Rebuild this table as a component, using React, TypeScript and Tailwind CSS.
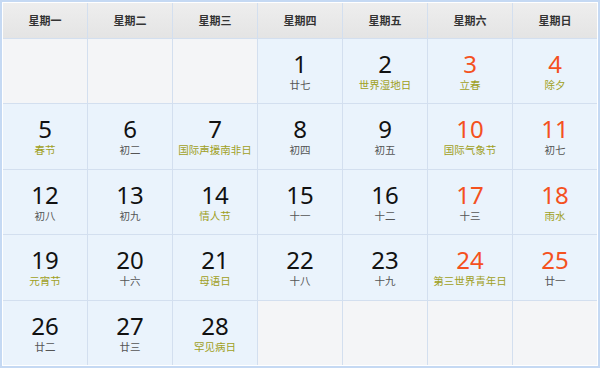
import React from "react";

type Cell = { d: number; t: string; f?: boolean } | null;

const rows: Cell[][] = [
  [null, null, null, { d: 1, t: "廿七" }, { d: 2, t: "世界湿地日", f: true }, { d: 3, t: "立春", f: true }, { d: 4, t: "除夕", f: true }],
  [{ d: 5, t: "春节", f: true }, { d: 6, t: "初二" }, { d: 7, t: "国际声援南非日", f: true }, { d: 8, t: "初四" }, { d: 9, t: "初五" }, { d: 10, t: "国际气象节", f: true }, { d: 11, t: "初七" }],
  [{ d: 12, t: "初八" }, { d: 13, t: "初九" }, { d: 14, t: "情人节", f: true }, { d: 15, t: "十一" }, { d: 16, t: "十二" }, { d: 17, t: "十三" }, { d: 18, t: "雨水", f: true }],
  [{ d: 19, t: "元宵节", f: true }, { d: 20, t: "十六" }, { d: 21, t: "母语日", f: true }, { d: 22, t: "十八" }, { d: 23, t: "十九" }, { d: 24, t: "第三世界青年日", f: true }, { d: 25, t: "廿一" }],
  [{ d: 26, t: "廿二" }, { d: 27, t: "廿三" }, { d: 28, t: "罕见病日", f: true }, null, null, null, null],
];

const heads = ["星期一", "星期二", "星期三", "星期四", "星期五", "星期六", "星期日"];

export default function App() {
  return (
    <div className="w-[600px] h-[368px] border-2 border-[#c5d9f3] bg-white p-px font-['Noto_Sans','Noto_Sans_CJK_SC',sans-serif]">
      <div className="grid h-full grid-cols-7 grid-rows-[35px_repeat(5,1fr)] gap-px bg-[#d3dfef]">
        {heads.map((h) => (
          <div
            key={h}
            className="flex items-center justify-center bg-gradient-to-b from-[#eeeeee] to-[#e4e4e4] text-[11px] font-bold text-[#333] font-['Noto_Sans_CJK_SC',sans-serif]"
          >
            {h}
          </div>
        ))}
        {rows.flat().map((c, i) => {
          const weekend = i % 7 >= 5;
          if (!c) return <div key={i} className="bg-[#f4f5f7]" />;
          return (
            <div key={i} className="flex flex-col items-center bg-[#eaf3fc] pt-[11px]">
              <div
                className={`text-[24px] leading-[28px] font-['Noto_Sans',sans-serif] ${weekend ? "text-[#f4511e]" : "text-[#111]"}`}
              >
                {c.d}
              </div>
              <div
                className={`text-[10.5px] leading-[14px] whitespace-nowrap font-['Noto_Sans_CJK_SC',sans-serif] ${c.f ? "text-[#a0a01c]" : "text-[#555]"}`}
              >
                {c.t}
              </div>
            </div>
          );
        })}
      </div>
    </div>
  );
}
